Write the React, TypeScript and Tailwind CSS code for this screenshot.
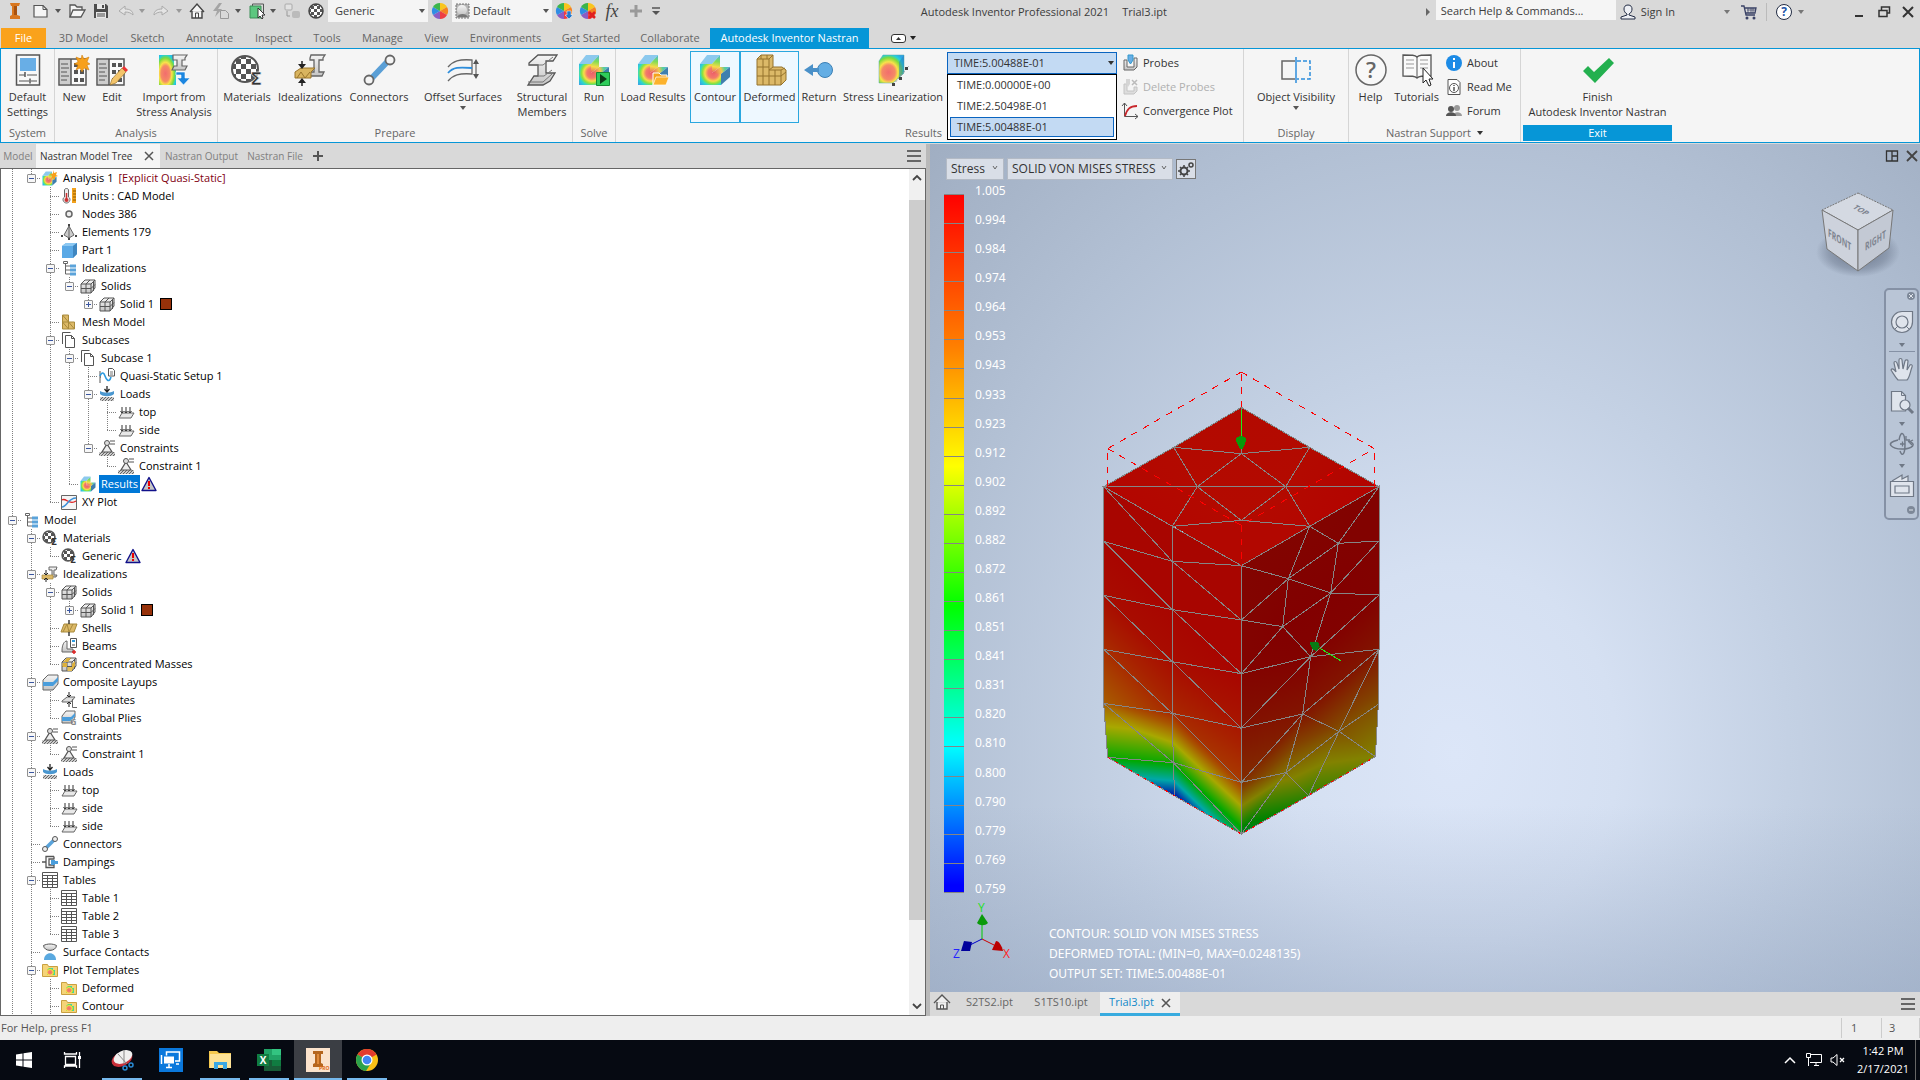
import React from 'react';

const UI_FONT = "font-['Open_Sans','Noto_Sans',sans-serif]";
const VIEW_FONT = "font-['Noto_Sans','Open_Sans',sans-serif]";

/* ---------- small shared pieces ---------- */

function Svg({ s = 16, box, children, className = '' }: { s?: number; box?: string; children: React.ReactNode; className?: string }) {
  return (
    <svg width={s} height={s} viewBox={box || `0 0 ${s} ${s}`} fill="none" className={`shrink-0 overflow-visible ${className}`} aria-hidden="true">
      {children}
    </svg>
  );
}

function Caret({ className = '', color = '#555' }: { className?: string; color?: string }) {
  return (
    <svg width="6" height="4" viewBox="0 0 6 4" className={`shrink-0 ${className}`} aria-hidden="true">
      <path d="M0 0h6L3 4z" fill={color} />
    </svg>
  );
}

function Defs() {
  return (
    <svg width="0" height="0" className="absolute" aria-hidden="true">
      <defs>
        <radialGradient id="contour" cx="0.38" cy="0.62" r="0.75">
          <stop offset="0" stopColor="#f26d6d" />
          <stop offset="0.35" stopColor="#f58a66" />
          <stop offset="0.5" stopColor="#f9e24a" />
          <stop offset="0.7" stopColor="#7fdb3c" />
          <stop offset="0.85" stopColor="#22cfe0" />
          <stop offset="1" stopColor="#2ea3e6" />
        </radialGradient>
        <radialGradient id="blockFront" gradientUnits="userSpaceOnUse" cx="14" cy="19" r="17">
          <stop offset="0" stopColor="#ee5f6a" />
          <stop offset="0.3" stopColor="#f27a6a" />
          <stop offset="0.48" stopColor="#f9dc4a" />
          <stop offset="0.62" stopColor="#8fe23c" />
          <stop offset="0.78" stopColor="#2bd6cf" />
          <stop offset="1" stopColor="#3aa3e6" />
        </radialGradient>
        <linearGradient id="blockSide" gradientUnits="userSpaceOnUse" x1="18" y1="1" x2="15" y2="19">
          <stop offset="0" stopColor="#4ab8e0" />
          <stop offset="0.35" stopColor="#7fdc55" />
          <stop offset="0.65" stopColor="#f6dc48" />
          <stop offset="1" stopColor="#e85d60" />
        </linearGradient>
        <linearGradient id="blockStep" gradientUnits="userSpaceOnUse" x1="15" y1="19" x2="31" y2="14">
          <stop offset="0" stopColor="#e85d60" />
          <stop offset="0.45" stopColor="#f2c84c" />
          <stop offset="0.7" stopColor="#58cf9a" />
          <stop offset="1" stopColor="#56b0e0" />
        </linearGradient>
        <linearGradient id="metal" x1="0" y1="0" x2="0" y2="1">
          <stop offset="0" stopColor="#f5f5f5" />
          <stop offset="1" stopColor="#c4c4c4" />
        </linearGradient>
        <pattern id="checks" width="10" height="10" patternUnits="userSpaceOnUse">
          <rect width="10" height="10" fill="#fff" />
          <path d="M0 0h5v5H0zM5 5h5v5H5z" fill="#555" />
        </pattern>
        <pattern id="smallChecks" width="6" height="6" patternUnits="userSpaceOnUse">
          <rect width="6" height="6" fill="#fff" />
          <path d="M0 0h3v3H0zM3 3h3v3H3z" fill="#555" />
        </pattern>
        <pattern id="hatch" width="3" height="3" patternUnits="userSpaceOnUse">
          <rect width="3" height="3" fill="#ccc" />
          <path d="M0 3L3 0" stroke="#666" />
        </pattern>
      </defs>
    </svg>
  );
}

function ColorWheel() {
  return (
    <>
      <path d="M8 8V0a8 8 0 0 1 7 4z" fill="#f9c51d" />
      <path d="M8 8l7-4a8 8 0 0 1 0 8z" fill="#f58220" />
      <path d="M8 8l7 4a8 8 0 0 1-7 4z" fill="#ee3d42" />
      <path d="M8 8v8a8 8 0 0 1-7-4z" fill="#8a5cc4" />
      <path d="M8 8l-7 4a8 8 0 0 1 0-8z" fill="#2f8de4" />
      <path d="M8 8L1 4a8 8 0 0 1 7-4z" fill="#3bb54a" />
    </>
  );
}

/* ---------- title bar ---------- */

function QuickButton({ label, className = '', children }: { label: string; className?: string; children: React.ReactNode }) {
  return (
    <button aria-label={label} className={`flex h-[22px] shrink-0 items-center justify-center ${className}`}>
      {children}
    </button>
  );
}

function TitleBar() {
  return (
    <div className="flex h-7 items-start text-[11px] text-[#3c3c3c]">
      <div className="flex h-[22px] w-[29px] items-center justify-center">
        <Svg>
          <path d="M3 0h10l-1 3h-2v9l3 1v3H3v-3l2-1V3H4z" fill="#d9771f" />
          <path d="M7 3h3v9H7z" fill="#a8520f" />
        </Svg>
      </div>
      <QuickButton label="New" className="w-6">
        <Svg><path d="M1 2.500h9l4 4V14H1z" fill="#f5f5f5" stroke="#555" strokeWidth="1.200" /><path d="M10 2.500v4h4" stroke="#555" /></Svg>
      </QuickButton>
      <QuickButton label="New options" className="w-[10px]"><Caret /></QuickButton>
      <QuickButton label="Open" className="w-7">
        <Svg><path d="M1 14V2h5l2 2h5v3" stroke="#555" strokeWidth="1.300" fill="#f5f5f5" /><path d="M1 14l3-7h12l-4 7z" fill="#f5f5f5" stroke="#555" strokeWidth="1.300" /></Svg>
      </QuickButton>
      <QuickButton label="Save" className="w-5">
        <Svg><path d="M1 1h12l2 2v12H1z" fill="#4d4d4d" /><path d="M4 1h8v5H4zM3 9h10v6H3z" fill="#e8e8e8" /><path d="M9 2h2v3H9z" fill="#4d4d4d" /><path d="M4 11h8M4 13h8" stroke="#4d4d4d" /></Svg>
      </QuickButton>
      <QuickButton label="Undo" className="ml-[4px] w-[22px]">
        <Svg><path d="M1 8l6-5v3c5 0 8 2 8 6-2-2-4-3-8-3v3z" fill="#e4e4e4" stroke="#aaa" /></Svg>
      </QuickButton>
      <QuickButton label="Undo list" className="w-[10px]"><Caret color="#999" /></QuickButton>
      <QuickButton label="Redo" className="w-7">
        <Svg><path d="M15 8L9 3v3C4 6 1 8 1 12c2-2 4-3 8-3v3z" fill="#e4e4e4" stroke="#aaa" /></Svg>
      </QuickButton>
      <QuickButton label="Redo list" className="w-2"><Caret color="#999" /></QuickButton>
      <QuickButton label="Home" className="ml-[2px] w-6">
        <Svg><path d="M3 8v7h10V8M1 9l7-8 7 8" stroke="#444" strokeWidth="1.400" fill="#f5f5f5" /><path d="M6.500 15v-5h3v5" stroke="#444" /></Svg>
      </QuickButton>
      <QuickButton label="Update" className="w-6">
        <Svg><path d="M6 0L0 8h4l-2 6 7-8H5l4-6z" fill="#a5a5a5" /><path d="M7.500 7.500h5l3 3v5h-8z" fill="#d9d9d9" stroke="#999" /></Svg>
      </QuickButton>
      <QuickButton label="Update options" className="w-[10px]"><Caret /></QuickButton>
      <QuickButton label="Select" className="ml-[2px] w-6">
        <Svg><path d="M3.500 3V1h11v11H12" stroke="#555" /><path d="M1 3h11v12H1z" fill="#5cc77f" stroke="#3b8f57" /><path d="M9 5v10l2-2 2 3 1-1-1-3h3z" fill="#fff" stroke="#333" /></Svg>
      </QuickButton>
      <QuickButton label="Select options" className="w-2"><Caret /></QuickButton>
      <QuickButton label="Link" className="ml-[3px] w-6">
        <Svg><rect x="1" y="1" width="7" height="6" rx="1" fill="#e2e2e2" stroke="#aaa" /><rect x="8" y="8" width="8" height="7" rx="2" fill="#bbb" /><path d="M3 8v5h3" stroke="#999" /></Svg>
      </QuickButton>
      <QuickButton label="Material browser" className="w-6">
        <Svg><circle cx="8" cy="8" r="7" fill="url(#smallChecks)" stroke="#444" strokeWidth="1.500" /></Svg>
      </QuickButton>
      <div className="relative w-[100px] shrink-0">
        <select aria-label="Material" className="h-[22px] w-full appearance-none bg-[#f5f5f5] pl-[7px]">
          <option>Generic</option>
        </select>
        <Caret className="absolute top-[9px] right-[3px]" />
      </div>
      <QuickButton label="Appearance" className="w-6"><Svg><ColorWheel /></Svg></QuickButton>
      <div className="relative w-[100px] shrink-0">
        <select aria-label="Appearance style" className="h-[22px] w-full appearance-none bg-[#f5f5f5] pl-[21px]">
          <option>Default</option>
        </select>
        <Svg className="absolute top-[3px] left-[3px]">
          <path d="M1 1h13v14H1z" fill="#b5b5b5" />
          <path d="M1 1h13v14H1z" stroke="#777" strokeDasharray="2 1" />
          <circle cx="7" cy="7" r="5" fill="url(#metal)" />
          <path d="M2 14c2-4 9-4 11 0z" fill="#777" />
        </Svg>
        <Caret className="absolute top-[9px] right-[3px]" />
      </div>
      <QuickButton label="Adjust" className="w-6"><Svg><ColorWheel /><path d="M11 8h4v4h2l-4 4-4-4h2z" fill="#2277cc" stroke="#fff" strokeWidth="0.500" /></Svg></QuickButton>
      <QuickButton label="Clear" className="w-6"><Svg><ColorWheel /><path d="M9 9l6 6M15 9l-6 6" stroke="#e02020" strokeWidth="2.500" /></Svg></QuickButton>
      <QuickButton label="Parameters" className="w-6 font-['Liberation_Serif',serif] text-[18px] text-[#444] italic">fx</QuickButton>
      <QuickButton label="Measure" className="w-6"><Svg s={12}><path d="M6 0v12M0 6h12" stroke="#999" strokeWidth="3" /></Svg></QuickButton>
      <QuickButton label="Customize" className="w-4"><Svg s={8}><path d="M0 1h8" stroke="#555" strokeWidth="1.500" /><path d="M0 4h8L4 8z" fill="#555" /></Svg></QuickButton>
      <div className="flex h-6 flex-1 items-center justify-center gap-[13px]">
        <span>Autodesk Inventor Professional 2021</span>
        <span>Trial3.ipt</span>
      </div>
      <div className="flex h-6 items-center">
        <Svg s={8} className="mr-1"><path d="M2 0l4 4-4 4z" fill="#666" /></Svg>
        <input aria-label="Search" placeholder="Search Help &amp; Commands..." className="mb-1 h-5 w-[180px] bg-[#f5f5f5] px-[5px] text-[11px] placeholder:text-[#3c3c3c]" />
        <button className="ml-1 flex items-center gap-[5px]">
          <Svg><path d="M8 1c3 0 4 2 4 4s-1 4-3 5v1l6 2v2H1v-2l6-2v-1C5 9 4 7 4 5s1-4 4-4z" fill="#eef0f5" stroke="#222c44" /></Svg>
          Sign In
        </button>
        <Caret className="ml-[49px]" color="#777" />
        <button aria-label="App store" className="ml-[11px]">
          <Svg><path d="M0 2h3l2 9h9M4 4h11l-1 5H5" stroke="#3a4266" strokeWidth="1.300" /><path d="M6 6h8M7 4v5M10 4v5M12 4v5" stroke="#3a4266" strokeWidth="0.700" /><circle cx="6" cy="14" r="1.500" fill="#3a4266" /><circle cx="13" cy="14" r="1.500" fill="#3a4266" /></Svg>
        </button>
        <span className="ml-[9px] h-[18px] w-px bg-[#bbb]" />
        <button aria-label="Help menu" className="ml-[9px] flex h-4 w-4 items-center justify-center rounded-full border border-[#222c44] bg-white text-xs font-bold text-[#2255aa]">?</button>
        <Caret className="ml-[6px]" color="#777" />
        <button aria-label="Minimize" className="ml-[50px]"><Svg s={12}><path d="M1 10h8" stroke="#333" strokeWidth="2" /></Svg></button>
        <button aria-label="Restore" className="ml-[12px]"><Svg s={12}><path d="M3.500 4V1h8v6H9" stroke="#333" strokeWidth="1.500" /><path d="M1 4.500h8v6H1z" stroke="#333" strokeWidth="1.500" /></Svg></button>
        <button aria-label="Close" className="mr-[6px] ml-[12px]"><Svg s={12}><path d="M1 1l10 10M11 1L1 11" stroke="#333" strokeWidth="2" /></Svg></button>
      </div>
    </div>
  );
}

const ribbonTabs = [
  { label: '3D Model', w: 'w-[75px]' },
  { label: 'Sketch', w: 'w-[53px]' },
  { label: 'Annotate', w: 'w-[71px]' },
  { label: 'Inspect', w: 'w-[57px]' },
  { label: 'Tools', w: 'w-[50px]' },
  { label: 'Manage', w: 'w-[61px]' },
  { label: 'View', w: 'w-[47px]' },
  { label: 'Environments', w: 'w-[91px]' },
  { label: 'Get Started', w: 'w-[80px]' },
  { label: 'Collaborate', w: 'w-[78px]' },
];

function RibbonTabs() {
  return (
    <div className="flex h-5 items-stretch pl-px text-[11px] text-[#666]">
      <button className="w-[45px] bg-[#faa21b] text-white">File</button>
      {ribbonTabs.map((t) => (
        <button key={t.label} className={`whitespace-nowrap ${t.w}`}>{t.label}</button>
      ))}
      <button className="ml-px w-[159px] bg-[#0696d7] whitespace-nowrap text-white">Autodesk Inventor Nastran</button>
      <button aria-label="Ribbon display" className="ml-[22px] flex items-center gap-1">
        <span className="flex h-[9px] w-[15px] items-center justify-center rounded-[3px] border border-[#333] bg-white">
          <svg width="5" height="3" viewBox="0 0 5 3"><path d="M0 3h5L2.500 0z" fill="#333" /></svg>
        </span>
        <Caret color="#222" />
      </button>
    </div>
  );
}

/* ---------- ribbon icons, 32 x 32 ---------- */

const tableSheet = (
  <>
    <path d="M1 5h27v26H1z" fill="#fafafa" stroke="#555" strokeWidth="1.500" />
    <path d="M2 6h11v24H2z" fill="#cdcdcd" />
    <path d="M3 10h7M3 14h8M3 18h6M3 22h8M3 26h6" stroke="#555" />
    <path d="M13 5v26" stroke="#555" strokeWidth="1.500" />
    <path d="M16 9h4v4h-4zM22 9h4v4h-4zM16 16h4v4h-4zM22 16h4v4h-4zM16 24h4v4h-4zM22 24h4v4h-4z" fill="#555" />
  </>
);
const contourBlock = (
  <>
    <path d="M1 10h12v9h9v12H1z" fill="url(#blockFront)" />
    <path d="M1 10L8 1h13l-8 9z" fill="#8cc9ee" />
    <path d="M13 10l8-9v12l-8 6z" fill="url(#blockSide)" />
    <path d="M13 19l8-6h10l-9 7z" fill="url(#blockStep)" />
    <path d="M22 20l9-7v10l-9 8z" fill="#3f7fae" />
  </>
);
const iBeam = <path d="M6 1h14l-2 3v2h-4v12h5l-2 4H3l2-4h4V6H5V4z" fill="url(#metal)" stroke="#666" strokeWidth="1.300" />;

const bigIcons: Record<string, React.ReactNode> = {
  settings: (
    <>
      <path d="M4.500 1h23v30h-23z" fill="#f8f8f8" stroke="#555" strokeWidth="1.500" />
      <path d="M8 4h16v13H8z" fill="#68aee6" />
      <path d="M7 21h6M15 21h10M7 27h10M19 27h6" stroke="#555" />
      <path d="M13 18v5M18 24.500v5" stroke="#555" strokeWidth="1.500" />
    </>
  ),
  new: <>{tableSheet}<path d="M24 1l2 4 5-2-2 5 3 2-3 1 2 5-5-2-2 4-2-4-4 2 2-5-4-1 4-2-2-5 5 2z" fill="#f7a01b" stroke="#c97400" strokeWidth="0.500" /></>,
  edit: <>{tableSheet}<path d="M16 25L26 14l4 4-10 11-6 2z" fill="#f3c46a" stroke="#8a6420" strokeWidth="0.600" /><path d="M26 14l2-2 4 4-2 2z" fill="#e33" /></>,
  import: (
    <>
      <path d="M1 1h15v14h2v16H1z" fill="url(#contour)" />
      <path d="M15 1h14l-2 3v2h-3v6h5l-2 4H14l2-4h3V6h-4V4z" fill="url(#metal)" stroke="#666" strokeWidth="1.200" />
      <path d="M18 18h9v6h5l-6.500 7L19 24h4v-3h-5z" fill="#1c86e0" stroke="#fff" strokeWidth="0.600" />
    </>
  ),
  materials: (
    <>
      <circle cx="14" cy="15" r="13" fill="url(#checks)" stroke="#555" strokeWidth="2" />
      <text x="19" y="31" fontSize="18" fontWeight="bold" fill="#333" stroke="#f5f5f5" strokeWidth="0.500" fontFamily="DejaVu Sans">Σ</text>
    </>
  ),
  idealizations: (
    <>
      <g transform="translate(11 0)">{iBeam}</g>
      <path d="M1 18l6-4h14l-4 4v6H1z" fill="#d9b45f" stroke="#99742a" />
      <path d="M3 24l4-6 4 6 5-6" stroke="#99742a" />
      <path d="M8 7v7M8 32v-7" stroke="#222" strokeWidth="1.500" /><path d="M4 10h8l-4 5zM4 29h8l-4-5z" fill="#222" />
    </>
  ),
  connectors: (
    <>
      <path d="M7 26L26 6" stroke="#5a9fd6" strokeWidth="6" />
      <circle cx="27" cy="6" r="4.500" fill="#f5f5f5" stroke="#666" strokeWidth="1.800" /><circle cx="6" cy="26" r="4.500" fill="#f5f5f5" stroke="#666" strokeWidth="1.800" />
    </>
  ),
  offset: (
    <>
      <path d="M1 13C6 7 12 5 25 6v14C12 19 6 21 1 27" stroke="#666" strokeWidth="1.300" />
      <path d="M1 19C6 13 12 13 25 14" stroke="#2d8ddb" strokeWidth="1.800" />
      <path d="M29 8v14" stroke="#444" /><path d="M26 10l3-5 3 5zM26 20l3 5 3-5z" fill="#555" />
    </>
  ),
  structural: (
    <>
      <path d="M3 9L12 1h19l-4 6h-7v12h9l-5 8-7 4H2l6-9h4V11H3z" fill="url(#metal)" stroke="#555" strokeWidth="1.300" />
      <path d="M3 11h14l10-8M12 22h6l8-6M2 28h15l9-8" stroke="#777" />
    </>
  ),
  run: <>{contourBlock}<path d="M18.500 18.500h13v13h-13z" fill="#2ecc5a" stroke="#158a35" /><path d="M22 20v10l7-5z" fill="#0c3b18" /></>,
  load: <>{contourBlock}<path d="M16 31V19h6l2 2h6v4" fill="#f4a21c" stroke="#fff" /><path d="M16 31l3-8h13l-3 8z" fill="#fcb22c" stroke="#fff" strokeWidth="0.700" /></>,
  contour: contourBlock,
  deformed: (
    <>
      <path d="M3 5l4-4h12v12h9l4 3v10l-5 5H3z" fill="#dcb968" stroke="#94732c" />
      <path d="M3 5h12l4-4M15 5v11h12l4-2M27 16v15M3 13h12M3 22h24l5-4M9 5v26M15 16v15M21 16v15M15 16l4-3M7 1v4M13 1v4" stroke="#94732c" />
    </>
  ),
  return: <><circle cx="22" cy="16" r="7.500" fill="#64aee4" stroke="#3c80b5" /><path d="M1 16l9-6v4h6v4h-6v4z" fill="#4a90c8" /></>,
  linear: (
    <>
      <path d="M2 7l4-6h21v18L16 29H2z" fill="url(#contour)" stroke="#5aa" strokeWidth="0.500" />
      <path d="M22 8l5-7v18l-5 5z" fill="#2a7fb8" opacity="0.500" />
      <path d="M16 31L32 12" stroke="#999" strokeDasharray="2 2" /><path d="M15 29h3v3h-3zM22 23h3v3h-3zM28 13h3v3h-3z" fill="#444" />
    </>
  ),
  visibility: (
    <>
      <path d="M15 7H2v18h13" stroke="#666" strokeWidth="1.500" /><path d="M17 7h13v18H17" stroke="#2d8ddb" strokeWidth="1.500" strokeDasharray="4 2" /><path d="M16 3v26" stroke="#2d8ddb" strokeWidth="1.500" />
    </>
  ),
  help: <><circle cx="16" cy="16" r="15" fill="#f8f8f8" stroke="#666" strokeWidth="1.500" /><text x="16" y="24" textAnchor="middle" fontSize="22" fontWeight="600" fill="#666">?</text></>,
  tutorials: (
    <>
      <path d="M16 3c-2-2-5-2-14-2v21c9 0 12 0 14 2 2-2 5-2 14-2V1C21 1 18 1 16 3z" fill="#fafafa" stroke="#555" strokeWidth="1.300" />
      <path d="M16 3v20" stroke="#555" /><path d="M5 6h8M5 10h8M5 14h8M19 6h8M19 10h8M19 14h8" stroke="#999" />
      <path d="M22 14v15l3-3 3 6 2-1-2-6h4z" fill="#fff" stroke="#222" />
    </>
  ),
  finish: <path d="M1 17l5-5 6 6L27 4l5 5-19 20z" fill="#23b04f" />,
};

function RibbonButton({ icon, lines, w, active, arrow }: { icon: string; lines: string[]; w: string; active?: boolean; arrow?: boolean }) {
  return (
    <button
      className={`flex h-[72px] flex-col items-center border pt-[2px] whitespace-nowrap ${w} ${
        active ? 'border-[#2aa7df] bg-[#eef8ff]' : 'border-transparent'
      }`}
    >
      <Svg s={32} box="0 0 32 32">{bigIcons[icon]}</Svg>
      <span className="mt-[3px] text-[11px] leading-[15px]">
        {lines.map((l) => <span key={l} className="block">{l}</span>)}
      </span>
      {arrow && <Caret className="mt-[2px]" />}
    </button>
  );
}

function Group({ label, w, labelClass = '', children, exit, arrow }: { label: string; w: string; labelClass?: string; children: React.ReactNode; exit?: boolean; arrow?: boolean }) {
  return (
    <div className={`flex shrink-0 flex-col justify-between border-[#d5d5d5] pt-[2px] pb-px ${exit ? '' : 'border-r'} ${w}`}>
      <div className="flex">{children}</div>
      <div className={`flex h-4 items-center justify-center gap-[6px] text-[11px] ${exit ? 'bg-[#0696d7] text-white' : 'text-[#666]'} ${labelClass}`}>
        {label}
        {arrow && <Caret color="#333" />}
      </div>
    </div>
  );
}

function SmallButton({ label, icon, disabled }: { label: string; icon: React.ReactNode; disabled?: boolean }) {
  return (
    <button disabled={disabled} className={`flex h-6 items-center gap-[5px] text-[11px] whitespace-nowrap ${disabled ? 'text-[#b0b0b0]' : ''}`}>
      <Svg>{icon}</Svg>
      {label}
    </button>
  );
}

const times = ['TIME:0.00000E+00', 'TIME:2.50498E-01', 'TIME:5.00488E-01'];

function TimePicker() {
  return (
    <div className="relative z-10 w-[170px] text-[11px]">
      <select
        aria-label="Result time"
        defaultValue={times[2]}
        className="mt-px block h-[22px] w-full appearance-none border border-[#0a64c0] bg-[#c3daf3] pl-[6px]"
      >
        {times.map((t) => <option key={t}>{t}</option>)}
      </select>
      <Caret className="absolute top-[10px] right-[3px]" color="#333" />
      <ul role="listbox" aria-label="Result times" className="absolute top-[23px] left-0 w-full border border-black bg-white px-[2px] pb-px">
        {times.map((t) => (
          <li
            key={t}
            role="option"
            aria-selected={t === times[2]}
            className={`mb-px flex h-5 items-center border pl-[6px] ${t === times[2] ? 'border-[#0a64c0] bg-[#c3daf3]' : 'border-transparent'}`}
          >
            {t}
          </li>
        ))}
      </ul>
    </div>
  );
}

function Ribbon() {
  return (
    <div className="mb-px flex h-[95px] border border-[#0696d7] bg-[#f5f5f5] text-[#333]">
      <Group label="System" w="w-[54px]"><RibbonButton icon="settings" lines={['Default', 'Settings']} w="w-[53px]" /></Group>
      <Group label="Analysis" w="w-[163px]">
        <RibbonButton icon="new" lines={['New']} w="w-[38px]" />
        <RibbonButton icon="edit" lines={['Edit']} w="w-[38px]" />
        <RibbonButton icon="import" lines={['Import from', 'Stress Analysis']} w="w-[86px]" />
      </Group>
      <Group label="Prepare" w="w-[355px]">
        <RibbonButton icon="materials" lines={['Materials']} w="w-[58px]" />
        <RibbonButton icon="idealizations" lines={['Idealizations']} w="w-[68px]" />
        <RibbonButton icon="connectors" lines={['Connectors']} w="w-[70px]" />
        <RibbonButton icon="offset" lines={['Offset Surfaces']} w="w-[98px]" arrow />
        <RibbonButton icon="structural" lines={['Structural', 'Members']} w="w-[60px]" />
      </Group>
      <Group label="Solve" w="w-[43px]"><RibbonButton icon="run" lines={['Run']} w="w-[42px]" /></Group>
      <Group label="Results" w="w-[628px]" labelClass="pr-3">
        <RibbonButton icon="load" lines={['Load Results']} w="w-[74px]" />
        <RibbonButton icon="contour" lines={['Contour']} w="w-[50px]" active />
        <RibbonButton icon="deformed" lines={['Deformed']} w="w-[59px]" active />
        <RibbonButton icon="return" lines={['Return']} w="w-[40px]" />
        <RibbonButton icon="linear" lines={['Stress Linearization']} w="w-[108px]" />
        <TimePicker />
        <div className="ml-[5px] flex flex-col">
          <SmallButton label="Probes" icon={<><path d="M2 5v10h10l3-3V3h-3v9H5V5z" fill="url(#metal)" stroke="#666" /><path d="M6 0h5v5l-2.500 4L6 5z" fill="#68aee6" stroke="#39c" /></>} />
          <SmallButton label="Delete Probes" disabled icon={<><path d="M2 5v10h10l3-3V8h-3v4H5V5z" fill="#ddd" stroke="#c4c4c4" /><path d="M4 0h4v5L6 8 4 5z" fill="#d5d5d5" /><path d="M10 1l5 5M15 1l-5 5" stroke="#bbb" strokeWidth="1.500" /></>} />
          <SmallButton label="Convergence Plot" icon={<><path d="M2.500 0v13.500H16" stroke="#555" /><path d="M0 3l2.500-3L5 3M13 11l3 2.500-3 2.500" stroke="#555" /><path d="M3 13C5 6 8 3 15 3" stroke="#c8272c" strokeWidth="1.800" /></>} />
        </div>
      </Group>
      <Group label="Display" w="w-[105px]"><RibbonButton icon="visibility" lines={['Object Visibility']} w="w-[104px]" arrow /></Group>
      <Group label="Nastran Support" w="w-[172px]" arrow>
        <RibbonButton icon="help" lines={['Help']} w="w-[43px]" />
        <RibbonButton icon="tutorials" lines={['Tutorials']} w="w-[49px]" />
        <div className="ml-[5px] flex flex-col">
          <SmallButton label="About" icon={<><circle cx="8" cy="8" r="8" fill="#1c8be6" /><path d="M8 7v6M8 3v2" stroke="#fff" strokeWidth="2" /></>} />
          <SmallButton label="Read Me" icon={<><path d="M2 .5h9l3 3v12H2z" fill="#fff" stroke="#555" /><circle cx="8" cy="9" r="4.500" stroke="#555" /><path d="M8 8v4M8 6v1" stroke="#555" strokeWidth="1.500" /></>} />
          <SmallButton label="Forum" icon={<><circle cx="5" cy="6" r="3" fill="#555" /><circle cx="11" cy="5" r="3" fill="#999" /><path d="M7 13c0-5 9-5 9 0z" fill="#999" /><path d="M0 13c0-5 10-5 10 0z" fill="#555" /></>} />
        </div>
      </Group>
      <Group label="Exit" w="w-[151px] pl-[2px]" exit><RibbonButton icon="finish" lines={['Finish', 'Autodesk Inventor Nastran']} w="w-[149px]" /></Group>
    </div>
  );
}

/* ---------- model tree ---------- */

const cubeStack = (
  <>
    <path d="M1 6l4-4h10v8l-4 5H1z" fill="url(#metal)" stroke="#555" />
    <path d="M1 6h10v9M11 6l4-4M6 6v9M1 10.500h10l4-4M6 6l4-4M13.500 4v9" stroke="#555" />
  </>
);
const folder = (
  <>
    <path d="M.5 2.500h5l1 2h9v10H.5z" fill="#f5d478" stroke="#c9a040" />
    <path d="M5 8l2-2h4v2h2v5H5z" fill="url(#contour)" />
  </>
);
const structure = (
  <>
    <path d="M2.500 1.500h4v2h-4zM4.500 4v10h5M4.500 6h5M4.500 10h5" stroke="#666" />
    <path d="M9 4.500h6v3H9zM9 8.500h6v3H9zM9 12.500h6v3H9z" fill="#5ba3da" />
  </>
);

const treeIcons: Record<string, React.ReactNode> = {
  analysis: <><g transform="translate(0 1) scale(.47)">{contourBlock}</g><path d="M11 0l1 3 3-1-1 3 2 1-3 1v3l-2-2-2 1 1-3-2-2 3-.5z" fill="#f7a01b" /></>,
  units: <><path d="M3.500 2c0-2 4-2 4 0v7c3 2 1 6-2 6s-5-4-2-6z" fill="#eee" stroke="#666" /><path d="M5.500 5v6" stroke="#c33" strokeWidth="1.500" /><circle cx="5.500" cy="12" r="2" fill="#c33" /><path d="M11 0h4v15h-4z" fill="#f3a21c" /><path d="M12 3h3M12 6h3M12 9h3M12 12h3" stroke="#8a5a00" /></>,
  node: <circle cx="8" cy="8" r="3" fill="#eee" stroke="#666" strokeWidth="1.500" />,
  element: <><path d="M8 2l5 9-5 3-5-3z" fill="#ccc" stroke="#666" /><path d="M8 2v12" stroke="#666" /><path d="M7 0h2v2H7zM0 11h2v2H0zM14 11h2v2h-2zM7 14h2v2H7z" fill="#444" /></>,
  part: <><path d="M1 4l4-3h11v11l-4 4H1z" fill="#5aa9e6" /><path d="M1 4l4-3h11l-4 3z" fill="#8cc8f2" /><path d="M12 4l4-3v11l-4 4z" fill="#3f86c0" /></>,
  structure,
  solids: cubeStack,
  mesh: <><path d="M1.500 1h6v7h6v7h-12z" fill="#dcb968" stroke="#a88a3c" /><path d="M1.500 8h6v7M1.500 1l6 7M1.500 8l6 7M7.500 8l6 7" stroke="#a88a3c" /></>,
  subcases: <><path d="M1.500 12V.5h8" stroke="#555" /><path d="M4.500 3.500h6l3 3v9h-9z" fill="#fff" stroke="#555" /><path d="M10.500 3.500v3h3" stroke="#555" /></>,
  setup: <><path d="M1 3v12M1 9h1" stroke="#555" /><path d="M1 8c2-5 4-3 5 0s4 8 6 1" stroke="#2d9be0" strokeWidth="1.600" /><path d="M9.500.5h4l2 2V8h-6z" fill="#fff" stroke="#555" /><path d="M11 4h3M11 6h3" stroke="#777" /></>,
  loads: <><path d="M1 11h14v4H1z" fill="url(#hatch)" /><path d="M1 5c4 2 10 2 14 0v3c-3 3-11 3-14 0z" fill="#4a97d0" /><path d="M8 0v5M5.500 3L8 6l2.500-3" stroke="#222" strokeWidth="1.300" /></>,
  load: <><path d="M4 9h12l-3 5H1z" fill="#e8e8e8" stroke="#666" /><path d="M4 3v6M8 3v6M12 3v6M2.500 7L4 9l1.500-2M6.500 7L8 9l1.500-2M10.500 7L12 9l1.500-2" stroke="#333" /></>,
  constraint: <><path d="M0 12h16v4H0z" fill="url(#hatch)" /><path d="M8 4l5 8H3z" fill="#eee" stroke="#555" strokeWidth="1.200" /><circle cx="8" cy="3" r="2.500" fill="#ddd" stroke="#555" /><path d="M11 1h5M11 4h5" stroke="#555" /></>,
  results: <g transform="scale(.5)">{contourBlock}</g>,
  xyplot: <><path d="M.5 1.500h15v14H.5z" fill="#f5f5f5" stroke="#666" /><path d="M1 6c4-3 7 6 14 1" stroke="#d22" strokeWidth="1.400" /><path d="M1 13c5 0 6-9 14-9" stroke="#3a8fd8" strokeWidth="1.400" /></>,
  materials: <><circle cx="7" cy="7" r="6" fill="url(#smallChecks)" stroke="#555" strokeWidth="1.500" /><text x="9" y="15" fontSize="9" fontWeight="bold" fill="#333" fontFamily="DejaVu Sans">Σ</text></>,
  ideal: <><path d="M7 1h8l-1 3h-2v5h3l-1 2H8l2-2V4H7z" fill="url(#metal)" stroke="#666" /><path d="M0 9h11v4H0z" fill="#dcb968" stroke="#a88a3c" strokeWidth="0.700" /><path d="M4 4v5M4 16v-4M2 7l2 2 2-2M2 14l2-2 2 2" stroke="#222" /></>,
  shells: <><path d="M3 4h13l-3 8H0z" fill="#dcb968" stroke="#a88a3c" /><path d="M2 12l4-8 2 8 4-8" stroke="#a88a3c" /><path d="M8 0v4M8 12v4" stroke="#222" strokeWidth="1.300" /></>,
  beams: <><path d="M1 13C1 7 3 3 6 3v8h6v3H1z" fill="url(#metal)" stroke="#666" /><path d="M9.500.5h6v9h-6z" fill="#fff" stroke="#555" /><path d="M11 2h3v2h-3z" fill="#2d9be0" /><path d="M11 7h3" stroke="#555" /><path d="M11 14h4M13 12v4" stroke="#d22" strokeWidth="1.500" /></>,
  masses: <>{cubeStack}<path d="M6 2h4l-3 4H2zM1.500 7H6v4H1.500zM11 8l3-3v5l-3 4z" fill="#dcb03c" /><path d="M6.500 11H11v4H6.500z" fill="#e4be55" /></>,
  layup: <><path d="M1 6l5-5h10v9l-5 6H1z" fill="url(#metal)" stroke="#666" /><path d="M1 8h10l5-5v4l-5 5H1z" fill="#4a9ddb" /></>,
  laminates: <><path d="M1 9l5-4h8l-4 5H1z" fill="#ddd" stroke="#666" /><path d="M8 0v5M8 10v5M6 3l2 2 2-2M6 12l2-2 2 2" stroke="#222" /><path d="M11.500 7v8.500H16" stroke="#666" /></>,
  plies: <><path d="M1 6l4-5h9v6l-3 6H1z" fill="url(#metal)" stroke="#666" /><path d="M1 7h9l4-4v3l-4 5H1z" fill="#4a9ddb" /><text x="9" y="15" fontSize="9" fontWeight="bold" fill="#555" stroke="#fff" strokeWidth="0.300">G</text></>,
  connector: <><path d="M3 13L13 3" stroke="#5aa3da" strokeWidth="3.500" /><circle cx="13" cy="3" r="2.500" fill="#eee" stroke="#555" /><circle cx="3" cy="13" r="2.500" fill="#eee" stroke="#555" /></>,
  damping: <><path d="M12 2.500H4v11h8v-3M12 2.500v3M4 8H0M12 5H7v6h5" stroke="#555" strokeWidth="1.300" /><path d="M9 6h4v1h3v3h-3v1H9z" fill="#4a9ddb" /></>,
  table: <><path d="M.5.5h15v15H.5z" fill="#fff" stroke="#555" /><path d="M.5 3.500h15M.5 6.500h15M.5 9.500h15M.5 12.500h15M5.500 4v12M10.500 4v12" stroke="#555" /></>,
  contact: <><path d="M2 16c0-9 12-9 12 0z" fill="#5aa9e0" /><path d="M1.500 1.500c4-2 9-2 13 0C14 8 2 8 1.500 1.500z" fill="url(#metal)" stroke="#555" /></>,
  folder,
};

type Row = { level: number; icon: string; label: string; open?: boolean; note?: string; swatch?: boolean; warn?: boolean; selected?: boolean };

const rows: Row[] = [
  { level: 1, icon: 'analysis', label: 'Analysis 1', note: '[Explicit Quasi-Static]', open: true },
  { level: 2, icon: 'units', label: 'Units : CAD Model' },
  { level: 2, icon: 'node', label: 'Nodes 386' },
  { level: 2, icon: 'element', label: 'Elements 179' },
  { level: 2, icon: 'part', label: 'Part 1' },
  { level: 2, icon: 'structure', label: 'Idealizations', open: true },
  { level: 3, icon: 'solids', label: 'Solids', open: true },
  { level: 4, icon: 'solids', label: 'Solid 1', open: false, swatch: true },
  { level: 2, icon: 'mesh', label: 'Mesh Model' },
  { level: 2, icon: 'subcases', label: 'Subcases', open: true },
  { level: 3, icon: 'subcases', label: 'Subcase 1', open: true },
  { level: 4, icon: 'setup', label: 'Quasi-Static Setup 1' },
  { level: 4, icon: 'loads', label: 'Loads', open: true },
  { level: 5, icon: 'load', label: 'top' },
  { level: 5, icon: 'load', label: 'side' },
  { level: 4, icon: 'constraint', label: 'Constraints', open: true },
  { level: 5, icon: 'constraint', label: 'Constraint 1' },
  { level: 3, icon: 'results', label: 'Results', selected: true, warn: true },
  { level: 2, icon: 'xyplot', label: 'XY Plot' },
  { level: 0, icon: 'structure', label: 'Model', open: true },
  { level: 1, icon: 'materials', label: 'Materials', open: true },
  { level: 2, icon: 'materials', label: 'Generic', warn: true },
  { level: 1, icon: 'ideal', label: 'Idealizations', open: true },
  { level: 2, icon: 'solids', label: 'Solids', open: true },
  { level: 3, icon: 'solids', label: 'Solid 1', open: false, swatch: true },
  { level: 2, icon: 'shells', label: 'Shells' },
  { level: 2, icon: 'beams', label: 'Beams' },
  { level: 2, icon: 'masses', label: 'Concentrated Masses' },
  { level: 1, icon: 'layup', label: 'Composite Layups', open: true },
  { level: 2, icon: 'laminates', label: 'Laminates' },
  { level: 2, icon: 'plies', label: 'Global Plies' },
  { level: 1, icon: 'constraint', label: 'Constraints', open: true },
  { level: 2, icon: 'constraint', label: 'Constraint 1' },
  { level: 1, icon: 'loads', label: 'Loads', open: true },
  { level: 2, icon: 'load', label: 'top' },
  { level: 2, icon: 'load', label: 'side' },
  { level: 2, icon: 'load', label: 'side' },
  { level: 1, icon: 'connector', label: 'Connectors' },
  { level: 1, icon: 'damping', label: 'Dampings' },
  { level: 1, icon: 'table', label: 'Tables', open: true },
  { level: 2, icon: 'table', label: 'Table 1' },
  { level: 2, icon: 'table', label: 'Table 2' },
  { level: 2, icon: 'table', label: 'Table 3' },
  { level: 1, icon: 'contact', label: 'Surface Contacts' },
  { level: 1, icon: 'folder', label: 'Plot Templates', open: true },
  { level: 2, icon: 'folder', label: 'Deformed' },
  { level: 2, icon: 'folder', label: 'Contour' },
];

// true when another row on this level follows before its parent closes
function continues(index: number, level: number) {
  for (let i = index + 1; i < rows.length; i++) {
    if (rows[i].level === level) return true;
    if (rows[i].level < level) return false;
  }
  return true;
}

const V_DOTS = 'w-px bg-[repeating-linear-gradient(to_bottom,#808080_0_1px,transparent_1px_2px)]';
const H_DOTS = 'h-px bg-[repeating-linear-gradient(to_right,#808080_0_1px,transparent_1px_2px)]';

function TreeRow({ row, index }: { row: Row; index: number }) {
  return (
    <li role="treeitem" aria-selected={!!row.selected} className="flex h-[18px] items-center whitespace-nowrap">
      {Array.from({ length: row.level }, (_, l) => (
        <span key={l} className="flex h-full w-[19px] shrink-0 justify-center">
          {continues(index, l) && <span className={`h-full ${V_DOTS}`} />}
        </span>
      ))}
      <span className="relative h-full w-[19px] shrink-0">
        <span className={`absolute top-0 left-[9px] ${continues(index, row.level) ? 'h-full' : 'h-[9px]'} ${V_DOTS}`} />
        <span className={`absolute top-[9px] left-[9px] w-[10px] ${H_DOTS}`} />
        {row.open !== undefined && (
          <button
            aria-label={`${row.open ? 'Collapse' : 'Expand'} ${row.label}`}
            className="absolute top-[5px] left-[5px] flex h-[9px] w-[9px] items-center justify-center rounded-[1px] border border-[#919191] bg-[#f7f7f7]"
          >
            <svg width="5" height="5" viewBox="0 0 5 5">
              <path d={row.open ? 'M0 2h5v1H0z' : 'M0 2h2V0h1v2h2v1H3v2H2V3H0z'} fill="#3a56a0" />
            </svg>
          </button>
        )}
      </span>
      <Svg className="ml-px">{treeIcons[row.icon]}</Svg>
      <span className={`ml-[3px] flex h-[18px] items-center px-[2px] ${row.selected ? 'bg-[#0078d7] text-white' : ''}`}>{row.label}</span>
      {row.note && <span className="ml-[3px] text-[#7f0010]">{row.note}</span>}
      {row.swatch && <span className="ml-1 h-3 w-3 border border-black bg-[#97320a]" />}
      {row.warn && (
        <Svg className="ml-px">
          <path d="M8 1.500l7 13H1z" fill="#c6c6c6" stroke="#10108a" strokeWidth="1.400" strokeLinejoin="round" />
          <path d="M8 5v5M8 11v2" stroke="#e00" strokeWidth="2" />
        </Svg>
      )}
    </li>
  );
}

function Burger() {
  return (
    <Svg s={14}><path d="M0 2h14M0 7h14M0 12h14" stroke="#666" strokeWidth="2" /></Svg>
  );
}

function BrowserPanel() {
  return (
    <section className="flex w-[926px] shrink-0 flex-col text-[11px]">
      <div className="flex h-6 shrink-0 items-stretch text-[10px] text-[#808080]">
        <button className="w-9">Model</button>
        <div className="flex w-[124px] items-center justify-between bg-[#f5f5f5] px-[4px] text-[#333]">
          <button className="whitespace-nowrap">Nastran Model Tree</button>
          <button aria-label="Close tab" className="mr-[2px]"><Svg s={10}><path d="M1 1l8 8M9 1L1 9" stroke="#555" strokeWidth="1.500" /></Svg></button>
        </div>
        <button className="w-[83px] whitespace-nowrap">Nastran Output</button>
        <button className="w-[64px] whitespace-nowrap">Nastran File</button>
        <button aria-label="Add tab" className="ml-[6px]"><Svg s={10}><path d="M5 0v10M0 5h10" stroke="#555" strokeWidth="2" /></Svg></button>
        <button aria-label="Panel menu" className="mr-[5px] ml-auto"><Burger /></button>
      </div>
      <div className="flex min-h-0 flex-1 border border-[#666] bg-white">
        <ul role="tree" aria-label="Nastran model tree" className="min-w-0 flex-1 overflow-hidden pl-[2px] text-black">
          {rows.map((r, i) => <TreeRow key={i} row={r} index={i} />)}
        </ul>
        <div className="flex w-4 flex-col items-center bg-[#f0f0f0] py-[5px]">
          <Svg s={8}><path d="M0 6l4-4 4 4" stroke="#444" strokeWidth="1.800" /></Svg>
          <div className="mt-[18px] h-[720px] w-full shrink-0 bg-[#cdcdcd]" />
          <Svg s={8} className="mt-auto"><path d="M0 2l4 4 4-4" stroke="#444" strokeWidth="1.800" /></Svg>
        </div>
      </div>
    </section>
  );
}

/* ---------- result model ---------- */

type Vertex = [number, number, number];

// x, y and the normalised stress at each mesh vertex
const V: Record<string, Vertex> = {
  T: [484, 142, 0.97], TL: [281, 262, 0.97], TR: [689, 262, 0.97], C1: [352, 380, 0.97], C2: [617, 380, 0.97], P1: [484, 281, 0.97], P2: [484, 481, 0.97],
  L0: [71, 380, 0.98], L1: [71, 544, 0.98], L2: [71, 706, 0.96], L3: [71, 868, 0.87], L4: [71, 1030, 0.76], L5: [83, 1192, 0.43],
  M0: [277, 499, 0.98], M1: [277, 604, 0.98], M2: [277, 749, 0.98], M3: [277, 905, 0.96], M4: [277, 1060, 0.88], M5: [280, 1208, 0.44], M6: [284, 1308, 0.02],
  F0: [484, 617, 0.98], F1: [484, 780, 0.98], F2: [484, 941, 0.98], F3: [484, 1104, 0.93], F4: [484, 1267, 0.84], F5: [484, 1422, 0.36],
  BR: [689, 499, 0.98], A: [775, 550, 0.99], B: [625, 656, 0.99], C: [752, 699, 1], D: [608, 800, 1], E: [692, 890, 0.99], G: [668, 1062, 0.92],
  H: [777, 1114, 0.74], I: [618, 1238, 0.66], J: [686, 1307, 0.5],
  R0: [897, 380, 0.99], R1: [897, 543, 0.99], R2: [897, 705, 0.99], R3: [897, 868, 0.92], R4: [895, 1033, 0.74], R5: [886, 1190, 0.62],
};

const faces = [
  {
    shade: 0.7,
    tris: 'T TL P1,T TR P1,TL C1 P1,TR C2 P1,TL L0 C1,TR R0 C2,P1 C1 C2,C1 C2 P2,L0 C1 M0,R0 C2 BR,C1 M0 P2,C2 BR P2',
  },
  {
    shade: 0.66,
    tris: 'L0 M0 M1,L0 L1 M1,L1 M1 M2,L1 L2 M2,L2 M2 M3,L2 L3 M3,L3 M3 M4,L3 L4 M4,L4 M4 M5,L4 L5 M5,L5 M5 M6,M0 F0 M1,M1 F0 F1,M1 M2 F1,M2 F1 F2,M2 M3 F2,M3 F2 F3,M3 M4 F3,M4 F3 F4,M4 M5 F4,M5 F4 F5,M5 M6 F5',
  },
  {
    shade: 0.51,
    tris: 'BR R0 A,R0 R1 A,BR A B,BR B F0,F0 B F1,A B C,A C R1,C R1 R2,B C D,B D F1,D F1 F2,C D E,C E R2,D E F2,E R2 R3,E F2 F3,E G F3,E G R3,G F3 F4,G R3 H,R3 R4 H,H R4 R5,G H I,G I F4,H I J,H J R5,I F4 F5,I J F5',
  },
];

const scale: [number, number, number, number][] = [
  [0, 0, 0, 255],
  [0.21, 0, 255, 255],
  [0.42, 0, 255, 0],
  [0.62, 255, 255, 0],
  [0.78, 255, 128, 0],
  [0.9, 255, 50, 0],
  [0.98, 255, 8, 0],
  [1, 255, 0, 0],
];

// stress is linear inside a triangle, so one linear gradient colours it exactly
function Triangle({ id, names, shade }: { id: string; names: string[]; shade: number }) {
  const [[x0, y0, v0], [x1, y1, v1], [x2, y2, v2]] = names.map((n) => V[n]);
  const det = (x1 - x0) * (y2 - y0) - (x2 - x0) * (y1 - y0);
  let gx = ((v1 - v0) * (y2 - y0) - (v2 - v0) * (y1 - y0)) / det;
  let gy = ((x1 - x0) * (v2 - v0) - (x2 - x0) * (v1 - v0)) / det;
  if (Math.hypot(gx, gy) < 1e-6) {
    gx = 0;
    gy = -1e-6;
  }
  const n = gx * gx + gy * gy;
  const sx = x0 - (gx / n) * v0;
  const sy = y0 - (gy / n) * v0;
  return (
    <>
      <linearGradient id={id} gradientUnits="userSpaceOnUse" x1={sx} y1={sy} x2={sx + gx / n} y2={sy + gy / n}>
        {scale.map(([o, r, g, b]) => (
          <stop key={o} offset={o} stopColor={`rgb(${r * shade},${g * shade},${b * shade})`} />
        ))}
      </linearGradient>
      <path d={`M${x0} ${y0}L${x1} ${y1}L${x2} ${y2}z`} fill={`url(#${id})`} stroke="#858585" strokeWidth="3" />
    </>
  );
}

function ResultModel() {
  return (
    <svg width="320" height="490" viewBox="0 0 960 1470" shapeRendering="crispEdges" className="absolute top-[216px] left-[150px]" role="img" aria-label="Von Mises stress contour">
      <path d="M281 499L484 481L689 499L484 617z" fill="#b20700" />
      {faces.map((f, fi) =>
        f.tris.split(',').map((t, i) => <Triangle key={`${fi}-${i}`} id={`tri${fi}-${i}`} names={t.split(' ')} shade={f.shade} />)
      )}
      <g stroke="#f00" strokeWidth="3" fill="none" strokeDasharray="20 20">
        <path d="M484 36L83 266M484 36L883 266M83 266L484 496L883 266" />
        <path d="M484 142V36M83 380V266M883 380V266M484 496V617" />
        <path d="M83 1192L484 1422L886 1190" strokeDasharray="9 16" />
      </g>
      <path d="M484 150V238M782 902L708 858" stroke="#1df01d" strokeWidth="3" />
      <path d="M468 236c0-10 30-10 30 0v8l-10 22h-8l-12-22z" fill="#0a9a0a" />
      <path d="M690 846h24l6 14-12 14c-10-4-18-16-18-28z" fill="#0a7a14" />
    </svg>
  );
}

const legend = [
  '1.005', '0.994', '0.984', '0.974', '0.964', '0.953', '0.943', '0.933', '0.923', '0.912', '0.902', '0.892', '0.882',
  '0.872', '0.861', '0.851', '0.841', '0.831', '0.820', '0.810', '0.800', '0.790', '0.779', '0.769', '0.759',
];

function Legend() {
  return (
    <div className="flex pl-[14px] text-white">
      <div className="mt-[12px] flex h-[699px] w-5 flex-col border-b border-[#858585] bg-[linear-gradient(to_bottom,#f00_0%,#ff8000_22%,#ff0_39%,#0f0_59%,#0ff_79%,#00f_99%)]">
        {legend.slice(1).map((v) => <div key={v} className="flex-1 border-t border-[#858585]" />)}
      </div>
      <ol className={`ml-[11px] flex h-[716px] flex-col justify-between text-[12px] leading-[18px] ${VIEW_FONT}`}>
        {legend.map((v) => <li key={v}>{v}</li>)}
      </ol>
    </div>
  );
}

function ViewSelect({ label, value, w }: { label: string; value: string; w: string }) {
  return (
    <div className={`relative ${w}`}>
      <select aria-label={label} className="block h-[22px] w-full appearance-none border border-[#b3bac5] bg-[#d9dee7] pl-[4px] text-[12px] text-[#333]">
        <option>{value}</option>
      </select>
      <Svg s={6} className="absolute top-[7px] right-[6px]"><path d="M1 1l2 3 2-3" stroke="#666" /></Svg>
    </div>
  );
}

function Triad() {
  return (
    <svg width="64" height="60" viewBox="0 0 64 60" fill="none" className="ml-[21px] shrink-0" aria-hidden="true">
      <path d="M31 36V14" stroke="#0c0" /><path d="M31 36l14 7" stroke="#c00" /><path d="M31 36l-14 7" stroke="#00c" />
      <path d="M31 11l6 9c-3 3-8 3-11 0z" fill="#0a9a0a" />
      <path d="M52 48l-11-1 4-9c3 0 6 5 7 10z" fill="#b00" />
      <path d="M10 48l3-10 8 1-2 9z" fill="#00009c" />
      <text x="27" y="9" fontSize="12" fill="#1ee01e">Y</text>
      <text x="52" y="55" fontSize="12" fill="#f22">X</text>
      <text x="2" y="55" fontSize="12" fill="#22f">Z</text>
    </svg>
  );
}

function ViewCube() {
  return (
    <svg width="84" height="96" viewBox="0 0 84 96" className="absolute top-[44px] right-[20px]" aria-label="View cube" role="img">
      <defs>
        <radialGradient id="cubeShadow"><stop offset="0" stopColor="#5f6b80" stopOpacity="0.9" /><stop offset="0.7" stopColor="#5f6b80" stopOpacity="0.4" /><stop offset="1" stopColor="#5f6b80" stopOpacity="0" /></radialGradient>
      </defs>
      <ellipse cx="42" cy="64" rx="42" ry="25" fill="url(#cubeShadow)" />
      <path d="M42 5L77 22L42 42L6 22z" fill="#d4d9e2" stroke="#777" strokeDasharray="2 1" />
      <path d="M6 22L42 42V83L11 61z" fill="#cdd2dc" stroke="#777" />
      <path d="M77 22L42 42V83L73 60z" fill="#c3c9d4" stroke="#777" />
      <g fontSize="11" fontWeight="bold" fill="#7e8490" fontFamily="Open Sans">
        <text transform="matrix(.62 .34 -.6 .42 36 20)">TOP</text>
        <text transform="matrix(.62 .4 0 1 12 48)">FRONT</text>
        <text transform="matrix(.62 -.4 0 1 49 63)">RIGHT</text>
      </g>
    </svg>
  );
}

function NavBar() {
  const tool = 'flex h-6 w-6 items-center justify-center';
  const s = { fill: '#dfe4ec', stroke: '#6f7886', strokeWidth: 1.2 };
  return (
    <nav aria-label="Navigation bar" className="absolute top-[144px] right-px flex h-[232px] w-[35px] flex-col items-center rounded-[5px] border-2 border-[#8591a5] bg-[#b9c5d6]">
      <button aria-label="Close navigation bar" className="mt-[2px] mr-[2px] self-end"><Svg s={8}><circle cx="4" cy="4" r="4" fill="#7d8898" /><path d="M2 2l4 4M6 2L2 6" stroke="#dfe4ec" /></Svg></button>
      <button aria-label="Steering wheel" className={`mt-[10px] ${tool}`}><Svg s={24}><path d="M12 1.500h10.500V12A10.500 10.500 0 1 1 12 1.500z" {...s} /><circle cx="12" cy="12" r="6" {...s} /><path d="M5 19l3-3M19 19l-3-3" stroke="#6f7886" /></Svg></button>
      <Caret className="mt-[9px]" color="#6f7886" />
      <span className="mt-1 h-px w-[26px] bg-[#8591a5]" />
      <button aria-label="Pan" className={`mt-[6px] ${tool}`}><Svg s={24}><path d="M8 22C5 19 3 15 1 12c1-2 3-1 5 2L4 5c0-2 2-2 3 0l2 6V2c0-2 3-2 3 0l1 9 2-8c1-2 3-1 3 0l-1 9 3-5c1-1 3 0 2 2-2 5-2 10-5 13z" {...s} /></Svg></button>
      <button aria-label="Zoom" className={`mt-[8px] ${tool}`}><Svg s={24}><path d="M1.500 1.500h10l4 4V21h-14z" {...s} /><path d="M11.500 1.500v4h4" stroke="#6f7886" /><circle cx="15" cy="15" r="5" {...s} /><path d="M18 18l5 5" stroke="#6f7886" strokeWidth="3" /></Svg></button>
      <Caret className="mt-[8px]" color="#6f7886" />
      <button aria-label="Orbit" className={`mt-[6px] ${tool}`}><Svg s={24}><path d="M8 8c-14 3-6 9 4 9s16-5 6-8M10 19c2 6 5 4 5-7S11-3 9 8" stroke="#6f7886" strokeWidth="1.500" /><path d="M10 12h5M12.500 9.500v5M16 4v4h4M23 8l-4 2 3 3" stroke="#6f7886" strokeWidth="1.300" /></Svg></button>
      <Caret className="mt-[8px]" color="#6f7886" />
      <button aria-label="Look at" className={`mt-[6px] ${tool}`}><Svg s={24}><path d="M.5 7.500h23v15H.5zM2 7L12 1v4l6-3v5" {...s} /><path d="M5 12h14v7H5z" {...s} /></Svg></button>
      <button aria-label="Navigation bar options" className="mt-auto mr-[2px] mb-[4px] self-end"><Svg s={8}><circle cx="4" cy="4" r="4" fill="#7d8898" /><path d="M2 4h4" stroke="#dfe4ec" /></Svg></button>
    </nav>
  );
}

function Viewport() {
  return (
    <main className="relative flex min-h-0 flex-1 flex-col overflow-hidden bg-[linear-gradient(to_bottom,transparent_78%,rgba(140,158,186,0.4)_100%),radial-gradient(ellipse_at_53%_72%,#dce6f8_0%,#d5e0f2_22%,#c4d1e4_45%,#b2c0d4_72%,#a0aec2_100%)]">
      <div className="flex items-center gap-[3px] pt-[14px] pl-4">
        <ViewSelect label="Result type" value="Stress" w="w-[58px]" />
        <ViewSelect label="Result component" value="SOLID VON MISES STRESS" w="w-[166px]" />
        <button aria-label="Result options" className="flex h-5 w-5 items-center justify-center border border-[#777] bg-[#d9dee7]">
          <Svg s={16}><circle cx="6" cy="10" r="3.500" stroke="#444" strokeWidth="2" /><path d="M6 4v2M6 14v2M0 10h2M10 10h2M2 6l1 1M10 6L9 7M2 14l1-1M10 14l-1-1" stroke="#444" strokeWidth="1.500" /><circle cx="13" cy="4" r="2" stroke="#444" strokeWidth="1.500" /></Svg>
        </button>
      </div>
      <div className="mt-[2px]"><Legend /></div>
      <div className="mt-[5px] flex">
        <Triad />
        <div className={`mt-[21px] ml-[34px] text-[12px] leading-5 whitespace-nowrap text-white ${VIEW_FONT}`}>
          <p>CONTOUR: SOLID VON MISES STRESS</p>
          <p>DEFORMED TOTAL: (MIN=0, MAX=0.0248135)</p>
          <p>OUTPUT SET: TIME:5.00488E-01</p>
        </div>
      </div>
      <ResultModel />
      <ViewCube />
      <NavBar />
      <div className="absolute top-[6px] right-[2px] flex gap-2">
        <button aria-label="Tile windows"><Svg s={12}><path d="M.5 1h11v10H.5zM6 1v10M6 6h5" stroke="#333" strokeWidth="1.300" /></Svg></button>
        <button aria-label="Close document"><Svg s={12}><path d="M1 1l10 10M11 1L1 11" stroke="#444" strokeWidth="1.800" /></Svg></button>
      </div>
    </main>
  );
}

function DocumentTabs() {
  return (
    <div className="flex h-6 shrink-0 items-stretch text-[11px] text-[#666]">
      <button aria-label="Home" className="ml-1 pb-1"><Svg><path d="M3 8v7h10V8M0 9l8-8 8 8" stroke="#555" strokeWidth="1.400" fill="#eee" /><path d="M6.500 15v-4h3v4" stroke="#555" /></Svg></button>
      <button className="ml-[6px] w-[67px] pb-1">S2TS2.ipt</button>
      <button className="ml-px w-[74px] pb-1">S1TS10.ipt</button>
      <div className="ml-[2px] flex w-20 items-center justify-center gap-[7px] border-b-3 border-[#38abdf] bg-[#eee] text-[#1289c9]">
        <button>Trial3.ipt</button>
        <button aria-label="Close Trial3.ipt"><Svg s={10}><path d="M1 1l8 8M9 1L1 9" stroke="#555" strokeWidth="1.600" /></Svg></button>
      </div>
      <button aria-label="Document menu" className="mr-[5px] ml-auto"><Burger /></button>
    </div>
  );
}

function StatusBar() {
  return (
    <footer className="flex h-6 shrink-0 items-center bg-[#eee] text-[11px] text-[#555]">
      <span className="ml-px flex-1">For Help, press F1</span>
      <span className="h-5 w-10 border-l border-[#ccc] pl-[9px] leading-5">1</span>
      <span className="h-5 w-[39px] border-x border-[#ccc] pl-[7px] leading-5">3</span>
    </footer>
  );
}

/* ---------- taskbar ---------- */

const apps: { name: string; open?: boolean; active?: boolean; icon: React.ReactNode }[] = [
  { name: 'Start', icon: <path d="M4 6.500l6.500-1v6H4zM11.500 5.300L20 4v7.500h-8.500zM4 12.500h6.500v6L4 17.500zM11.500 12.500H20V20l-8.500-1.300z" fill="#fff" /> },
  { name: 'Task view', icon: <><path d="M4.500 8.500h10v8h-10zM3.500 4v2h12V4M3.500 20v-2h12v2M18.500 4v16" stroke="#fff" strokeWidth="1.300" /><path d="M17 8h3v3h-3z" fill="#fff" /></> },
  { name: 'Snipping Tool', open: true, icon: <><ellipse cx="12" cy="11" rx="11" ry="7" fill="#c9303a" transform="rotate(-25 12 11)" /><ellipse cx="13" cy="9" rx="10" ry="6" fill="#f0f0f0" transform="rotate(-25 13 9)" /><path d="M8 6l9 10M14 2v14" stroke="#888" /><circle cx="15" cy="20" r="2" stroke="#2a8ad4" strokeWidth="1.500" /><circle cx="21" cy="17" r="2" stroke="#2a8ad4" strokeWidth="1.500" /></> },
  { name: 'Remote Desktop', icon: <><path d="M0 0h24v24H0z" fill="#0a78dc" /><path d="M7.500 4h13v9h-13z" fill="#0a78dc" stroke="#fff" strokeWidth="1.500" /><path d="M4.500 8h11v8h-11z" fill="#fff" stroke="#0a78dc" /><path d="M2.500 7v9M7 19.500h6M10 16v4M17 16h3" stroke="#fff" strokeWidth="1.500" /></> },
  { name: 'File Explorer', open: true, icon: <><path d="M1 3h8l2 2h12v15H1z" fill="#f5c94f" /><path d="M2 6h21v14H2z" fill="#fde296" /><path d="M6 21v-7h13v7h-4v-4h-5v4z" fill="#3aa7e4" /></> },
  { name: 'Excel', open: true, icon: <><path d="M7 1h17v22H7z" fill="#21a366" /><path d="M7 12h17v11H7z" fill="#185c37" /><path d="M15 1h9v6h-9z" fill="#33c481" /><path d="M15 12h9v6h-9z" fill="#107c41" /><path d="M0 6h12v12H0z" fill="#107c41" /><text x="6" y="16" fontSize="10" fontWeight="bold" fill="#fff" textAnchor="middle">X</text></> },
  { name: 'Inventor', open: true, active: true, icon: <><path d="M0 0h24v24H0z" fill="#fbe3cc" /><path d="M7 3h10v3h-2v9l2 1v3H7v-3l2-1V6H7z" fill="#b5651d" /><path d="M11 6h2v10h-2z" fill="#e08a3a" /><text x="13" y="22" fontSize="5" fontWeight="bold" fill="#e06a10">PRO</text></> },
  { name: 'Chrome', open: true, icon: <><circle cx="12" cy="12" r="11" fill="#fbc116" /><path d="M12 12L2.500 6.500a11 11 0 0 1 19 0z" fill="#e33b2e" /><path d="M12 12L2.500 6.500A11 11 0 0 0 11 23l5-8z" fill="#2ba24c" /><circle cx="12" cy="12" r="5.500" fill="#fff" /><circle cx="12" cy="12" r="4.300" fill="#4285f4" /></> },
];

function Taskbar() {
  return (
    <div className="flex h-10 shrink-0 items-stretch bg-[#060a12] text-white">
      {apps.map((a) => (
        <button key={a.name} aria-label={a.name} className={`mr-px flex w-12 flex-col items-center justify-between pt-[8px] ${a.active ? 'bg-[#3b3e44]' : ''}`}>
          <Svg s={24}>{a.icon}</Svg>
          {a.open && <span className={`h-[2px] bg-[#76b9ed] ${a.active ? 'w-full' : 'w-10'}`} />}
        </button>
      ))}
      <div className="ml-auto flex items-center">
        <button aria-label="Show hidden icons"><Svg s={12}><path d="M1 9l5-5 5 5" stroke="#fff" strokeWidth="1.500" /></Svg></button>
        <button aria-label="Network" className="ml-[10px]"><Svg><path d="M4 2.500h11.500v8H4M8 13.500h5M10 10.500v3M2.500 6v8" stroke="#fff" /><path d="M.5 1.500h4v4h-4z" stroke="#fff" /></Svg></button>
        <button aria-label="Volume" className="ml-[8px]"><Svg><path d="M1 6h2l4-3.500v11L3 10H1z" stroke="#fff" /><path d="M10 6l4 4M14 6l-4 4" stroke="#fff" strokeWidth="1.300" /></Svg></button>
        <button className="ml-[10px] w-[54px] text-center text-[11px] leading-[18px]">
          <span className="block">1:42 PM</span>
          <span className="block">2/17/2021</span>
        </button>
        <span className="mr-1 ml-[5px] h-full w-px bg-[#666]" />
      </div>
    </div>
  );
}

export default function App() {
  return (
    <div className={`flex h-screen flex-col overflow-hidden bg-[#d9d9d9] ${UI_FONT}`}>
      <Defs />
      <header>
        <TitleBar />
        <RibbonTabs />
        <Ribbon />
      </header>
      <div className="flex min-h-0 flex-1">
        <BrowserPanel />
        <div className="w-1 shrink-0 bg-[#b9b9b9]" />
        <div className="flex min-w-0 flex-1 flex-col">
          <Viewport />
          <DocumentTabs />
        </div>
      </div>
      <StatusBar />
      <Taskbar />
    </div>
  );
}
